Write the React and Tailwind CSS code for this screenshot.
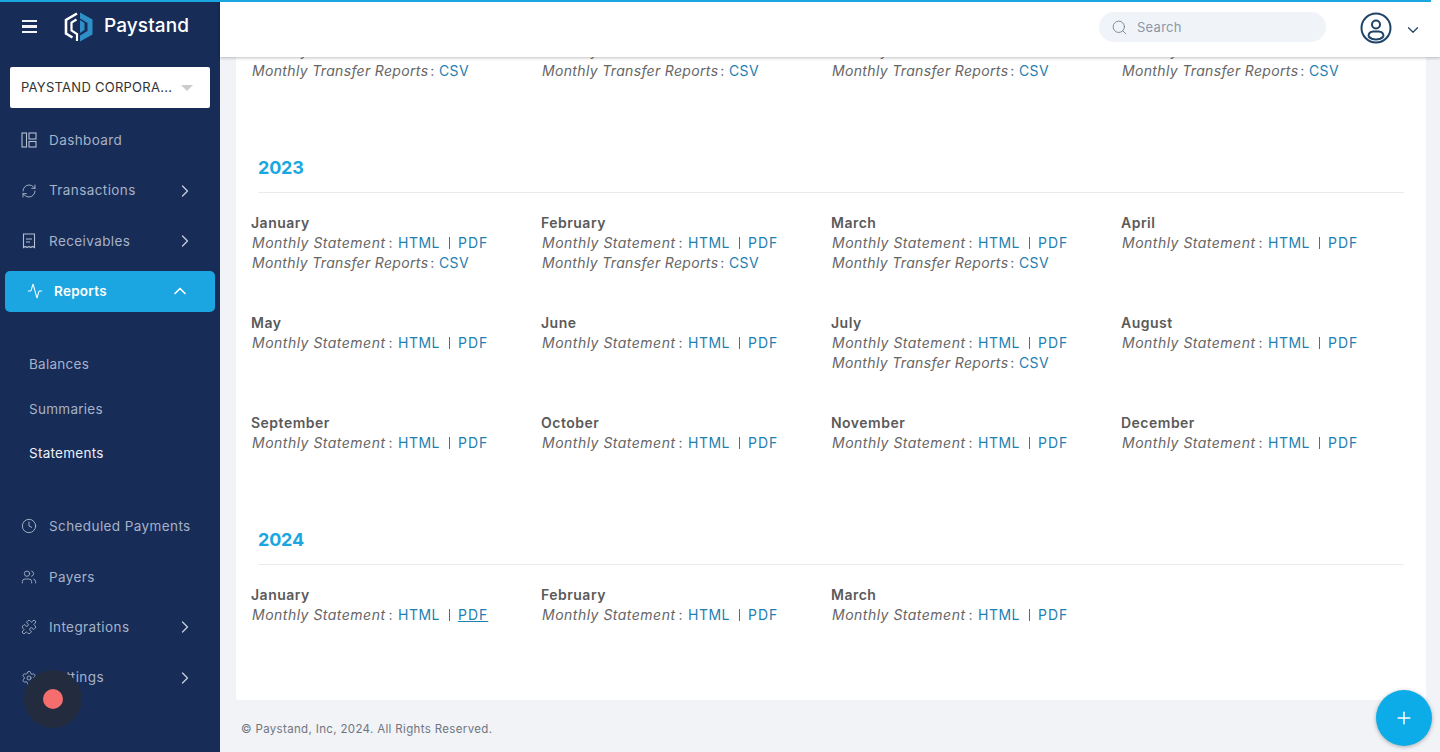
import { Activity, ChevronDown, ChevronRight, ChevronUp, Clock, Plus, Puzzle, RefreshCw, Search, Settings, Users } from "lucide-react";

const ff = "font-['Inter','Liberation_Sans',sans-serif]";

function DashIcon() {
    return (
        <svg width="16" height="16" viewBox="0 0 16 16" fill="none" stroke="currentColor" strokeWidth="1.1">
            <rect x="1" y="1" width="4.5" height="14" />
            <rect x="8" y="1" width="7" height="6" />
            <rect x="8" y="9.5" width="7" height="5.5" />
        </svg>
    );
}

function ReceiptIcon() {
    return (
        <svg width="16" height="16" viewBox="0 0 16 16" fill="none" stroke="currentColor" strokeWidth="1.1">
            <path d="M2.500 1h11v13.500l-2-1-1.700 1-1.800-1-1.800 1-1.700-1-2 1z" />
            <path d="M5 6h6M5 9h4" />
        </svg>
    );
}

function Logo() {
    return (
        <svg width="29" height="30" viewBox="0 0 29 30" fill="none">
            <path d="M13 1.500 L2 8 V21.500 L8.500 25.500" stroke="#fff" strokeWidth="2.600" />
            <path d="M12.500 7.500 L7.500 10.500 V18.500 L13 22 V29" stroke="#fff" strokeWidth="2.200" />
            <path d="M16 0.500 L28.500 7.500 V22.500 L16 29.500 V23.500 L23.500 19 V11 L16 6.500 Z" fill="#2f8fc7" />
            <path d="M16 8 L20.500 11 V18 L16 21 Z" fill="#2f8fc7" />
        </svg>
    );
}

function NavItem({ icon, label, arrow }) {
    return (
        <div className="flex items-center h-[50.4px] pl-[21px] pr-[25px] text-[#a6b2c9]">
            <span className="w-[28px] shrink-0 flex text-[#b4bfd2]">{icon}</span>
            <span className="flex-1 text-[13.5px] tracking-[0.03em] whitespace-nowrap">{label}</span>
            {arrow && <ChevronRight size={20} strokeWidth={1.6} className="text-[#c4cddc]" />}
        </div>
    );
}

function Sidebar() {
    return (
        <aside className="w-[220px] shrink-0 bg-[#172c56] flex flex-col">
            <div className="h-[57px] shrink-0 flex items-center pl-[22px] pb-[4px]">
                <div className="w-[15px] flex flex-col gap-[3px]">
                    <span className="h-[2.500px] bg-[#f2f4f8]" />
                    <span className="h-[2.500px] bg-[#f2f4f8]" />
                    <span className="h-[2.500px] bg-[#f2f4f8]" />
                </div>
                <span className="ml-[27px] flex"><Logo /></span>
                <span className="ml-[11px] text-white text-[19px] font-medium tracking-[0.005em]">Paystand</span>
            </div>
            <div className="mx-[10px] mt-[10px] h-[41px] shrink-0 bg-white rounded-[2px] flex items-center pl-[11px] pr-[17px]">
                <span className="flex-1 text-[13px] text-[#333] tracking-[0.02em] whitespace-nowrap">PAYSTAND CORPORA...</span>
                <span className="w-0 h-0 border-x-[6px] border-x-transparent border-t-[6px] border-t-[#ccc]" />
            </div>
            <div className="mt-[7px]">
                <NavItem icon={<DashIcon />} label="Dashboard" />
                <NavItem icon={<RefreshCw size={16} strokeWidth={1.3} />} label="Transactions" arrow />
                <NavItem icon={<ReceiptIcon />} label="Receivables" arrow />
            </div>
            <div className="mx-[5px] mt-[5px] h-[41px] shrink-0 rounded-[5px] bg-[#1ba6e1] flex items-center pl-[22px] pr-[25px] pb-[1px] text-white">
                <Activity size={16} strokeWidth={1.6} className="shrink-0" />
                <span className="ml-[11px] flex-1 text-[13.5px] font-semibold tracking-[0.02em]">Reports</span>
                <ChevronUp size={20} strokeWidth={2} />
            </div>
            <div className="mt-[42px] flex flex-col gap-[24.5px] pl-[29px] text-[13.5px] tracking-[0.02em] leading-[20px] text-[#a6b2c9]">
                <span>Balances</span>
                <span>Summaries</span>
                <span className="text-[#eef1f6]">Statements</span>
            </div>
            <div className="mt-[38px]">
                <NavItem icon={<Clock size={16} strokeWidth={1.3} />} label="Scheduled Payments" />
                <NavItem icon={<Users size={16} strokeWidth={1.2} />} label="Payers" />
                <NavItem icon={<Puzzle size={16} strokeWidth={1.2} />} label="Integrations" arrow />
                <NavItem icon={<Settings size={16} strokeWidth={1.2} />} label="Settings" arrow />
            </div>
        </aside>
    );
}

function Statement({ underline }) {
    return (
        <div className="flex items-center whitespace-nowrap pl-[1px] h-[20px]">
            <i className="text-[#666]">Monthly Statement</i>
            <span className="text-[#666] ml-[3px] mr-[5px]">:</span>
            <span className="text-[#1f7fb0]">HTML</span>
            <span className="mx-[8.500px] w-[1px] h-[12px] bg-[#666]" />
            <span className={underline ? "text-[#1f7fb0] underline tracking-[0.07em]" : "text-[#1f7fb0] tracking-[0.07em]"}>PDF</span>
        </div>
    );
}

function Transfer() {
    return (
        <div className="flex items-center whitespace-nowrap pl-[1px] h-[20px]">
            <i className="text-[#666] tracking-[0.024em]">Monthly Transfer Reports</i>
            <span className="text-[#666] ml-[2px] mr-[4px]">:</span>
            <span className="text-[#1f7fb0]">CSV</span>
        </div>
    );
}

function Month({ name, csv, underline }) {
    return (
        <div className="h-[100px]">
            <div className="font-semibold text-[#5a5a5a]">{name}</div>
            <Statement underline={underline} />
            {csv && <Transfer />}
        </div>
    );
}

function Year({ label, className }) {
    return (
        <div className={`mx-[22px] pb-[9px] border-b border-[#e9ebee] ${className}`}>
            <h2 className="text-[18px] font-bold leading-[30px] tracking-[-0.01em] text-[#1aa7e0]">{label}</h2>
        </div>
    );
}

const months2023 = [
    ["January", true], ["February", true], ["March", true], ["April"],
    ["May"], ["June"], ["July", true], ["August"],
    ["September"], ["October"], ["November"], ["December"],
];

export default function App() {
    return (
        <div className={`${ff} relative w-[1440px] h-[752px] overflow-hidden flex bg-[#f1f3f7]`}>
            <div className="absolute top-0 left-0 w-[1431px] h-[2px] bg-[#1aa7e0] z-30" />
            <Sidebar />
            <main className="flex-1 min-w-0 flex flex-col">
                <header className="relative z-10 h-[57px] shrink-0 bg-white shadow-[0_1px_3px_rgba(0,0,0,0.25)] flex items-center justify-end pr-[18px] pb-[3px]">
                    <div className="w-[227px] h-[30px] rounded-full bg-[#f0f3f7] flex items-center pl-[12px]">
                        <Search size={17} strokeWidth={1.3} className="text-[#75859a]" />
                        <span className="ml-[9px] mt-[1px] text-[13px] text-[#8b97a8] tracking-[0.02em]">Search</span>
                    </div>
                    <svg className="ml-[34px] mt-[2px]" width="32" height="32" viewBox="0 0 32 32" fill="none" stroke="#1f4468" strokeWidth="2">
                        <circle cx="16" cy="16" r="14.500" />
                        <circle cx="16" cy="12.500" r="4" />
                        <path d="M8.500 24.500c0-3.500 2.500-5 5-5h5c2.500 0 5 1.500 5 5M8.500 24.500c2 2 4.500 3 7.500 3s5.500-1 7.500-3" />
                    </svg>
                    <ChevronDown size={18} strokeWidth={1.6} className="ml-[12px] mt-[5px] text-[#1f4468]" />
                </header>
                <div className="flex-1 min-h-0 pl-[16px] pr-[14px] flex flex-col">
                    <section className="h-[643px] shrink-0 bg-white rounded-b-[3px] overflow-hidden text-[14px] leading-[20px] tracking-[0.035em]">
                        <div className="grid grid-cols-[290px_290px_290px_290px] pl-[15px] mt-[-16px]">
                            <div><Statement /><Transfer /></div>
                            <div><Statement /><Transfer /></div>
                            <div><Statement /><Transfer /></div>
                            <div><Statement /><Transfer /></div>
                        </div>
                        <Year label="2023" className="mt-[72px]" />
                        <div className="grid grid-cols-[290px_290px_290px_290px] pl-[15px] mt-[20px]">
                            {months2023.map(([name, csv]) => <Month key={name} name={name} csv={csv} />)}
                        </div>
                        <Year label="2024" className="mt-[12px]" />
                        <div className="grid grid-cols-[290px_290px_290px_290px] pl-[15px] mt-[20px]">
                            <Month name="January" underline />
                            <Month name="February" />
                            <Month name="March" />
                        </div>
                    </section>
                    <footer className="pl-[5px] mt-[21px] text-[11.5px] leading-[16px] text-[#6f7680] tracking-[0.03em]">© Paystand, Inc, 2024. All Rights Reserved.</footer>
                </div>
            </main>
            <button className="absolute left-[1376px] top-[690px] z-20 w-[56px] h-[56px] rounded-full bg-[#0cace9] shadow-[0_1px_4px_rgba(0,0,0,0.3)] flex items-center justify-center text-white">
                <Plus size={20} strokeWidth={1.8} />
            </button>
            <div className="absolute left-[24px] top-[670px] z-20 w-[58px] h-[58px] rounded-full bg-[#232c3f] flex items-center justify-center">
                <span className="w-[20px] h-[20px] rounded-full bg-[#f56d6d]" />
            </div>
        </div>
    );
}
